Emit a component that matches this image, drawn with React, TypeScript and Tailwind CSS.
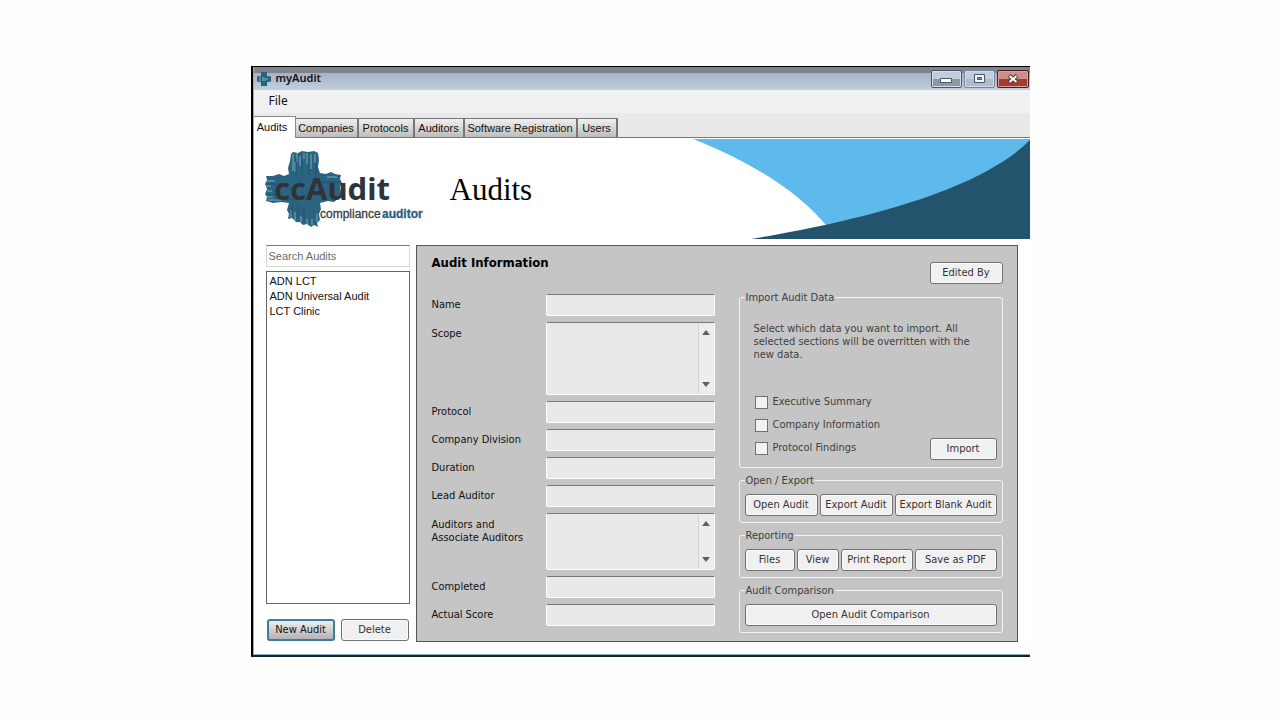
import { useState } from 'react';
import type { ReactNode } from 'react';

const TABS = [
  { label: 'Companies', width: 'w-[63px]' },
  { label: 'Protocols', width: 'w-[56px]' },
  { label: 'Auditors', width: 'w-[50px]' },
  { label: 'Software Registration', width: 'w-[113px]' },
  { label: 'Users', width: 'w-[40px]' },
];

const AUDITS = ['ADN LCT', 'ADN Universal Audit', 'LCT Clinic'];

const FIELD = 'border border-white border-t-[#777777] rounded-xs bg-[#e9e9e9]';

function Button({ children, className = '' }: { children: ReactNode; className?: string }) {
  return (
    <button
      type="button"
      className={`h-[22px] shrink-0 rounded-[3px] border border-[#707070] bg-[#f0f0f0] text-center leading-5 whitespace-nowrap text-[#333333] shadow-[inset_0_0_0_1px_#fafafa] ${className}`}
    >
      {children}
    </button>
  );
}

function TextRow({ id, label }: { id: string; label: string }) {
  return (
    <>
      <label htmlFor={id} className="pt-1 leading-[13px]">{label}</label>
      <input id={id} type="text" className={`h-[22px] w-full px-1 outline-none ${FIELD}`} />
    </>
  );
}

function AreaRow({ id, label, height }: { id: string; label: string; height: string }) {
  return (
    <>
      <label htmlFor={id} className="pt-[5px] pr-4 leading-[13px]">{label}</label>
      <div className={`flex ${height} ${FIELD}`}>
        <textarea id={id} className="min-w-0 flex-1 resize-none overflow-hidden bg-transparent px-1 outline-none" />
        <div className="my-px flex w-4 flex-col items-center justify-between border-l border-[#d0d0d0] bg-[#ededed] py-1.5">
          <svg width="8" height="5" viewBox="0 0 8 5" aria-hidden="true"><path d="M0 5 4 0l4 5z" fill="#606060" /></svg>
          <svg width="8" height="5" viewBox="0 0 8 5" aria-hidden="true"><path d="M0 0l4 5 4-5z" fill="#606060" /></svg>
        </div>
      </div>
    </>
  );
}

function Group({ title, children }: { title: string; children: ReactNode }) {
  return (
    <fieldset className="min-w-0 rounded-[3px] border border-[#f4f4f4] px-[5px] pb-1.5 text-[#3f3f3f]">
      <legend className="px-px leading-[14px]">{title}</legend>
      {children}
    </fieldset>
  );
}

function Check({ label }: { label: string }) {
  return (
    <label className="flex h-[23px] items-center gap-[5px]">
      <input type="checkbox" className="size-[13px] appearance-none border border-[#707070] bg-[#f2f2f2] checked:bg-[#24546d]" />
      {label}
    </label>
  );
}

function Logo() {
  return (
    <svg width="160" height="82" viewBox="0 0 160 82" role="img" aria-label="ccAudit compliance auditor" className="shrink-0">
      <path
        d="M27 6L29 4 34 5 38 3 44 4 50 3 54 5 55 12 54 19 56 25 62 26 67 24 71 26 77 27 76 31 78 35 76 39 77 45 75 50 70 54 64 53 56 55 57 61 55 66 56 72 53 75 54 79 50 77 47 79 43 76 39 77 36 74 32 74 28 70 24 71 25 66 23 62 25 55 17 54 9 55 2 53 3 49 1 46 3 41 1 36 3 32 2 28 9 28 15 26 20 28 25 26 24 20 26 13z"
        fill="#2b6481"
      />
      {/* dry brush streaks */}
      <g fill="none" stroke="#a9cfe0" strokeWidth="1" opacity=".65">
        <path d="M29 6v17M33 5v9M36 8v10M43 5v11M47 6v15M51 6v9M31 14v10M40 5v6" />
        <path d="M3 33h8M2 38h5M3 43h5M2 49h7M4 52h14M63 29h10" />
        <path d="M27 62v7M31 64v9M37 68v6M43 71v5M48 71v6M53 66v8" />
      </g>
      <g fill="none" stroke="#17455e" strokeWidth="1" opacity=".6">
        <path d="M32 10v18M38 12v14M45 10v17M52 14v16M28 58v9M34 57v13M40 60v10" />
        <path d="M4 36h14M5 47h9M12 51h24M58 34h18" />
      </g>
      <text x="10" y="52" fill="#30343a" fontFamily="'Noto Sans', sans-serif" fontWeight="700" fontSize="31">ccAudit</text>
      <text x="56" y="70" fill="#3a3d42" stroke="#3a3d42" strokeWidth=".3" fontFamily="'Liberation Sans', sans-serif" fontSize="12">compliance</text>
      <text x="118" y="70" fill="#2b5f7c" stroke="#2b5f7c" strokeWidth=".3" fontFamily="'Liberation Sans', sans-serif" fontWeight="700" fontSize="12">auditor</text>
    </svg>
  );
}

function TitleBar() {
  return (
    <header className="flex h-[23px] items-start border-t-6 border-[#80848d] bg-linear-to-b from-[#a5b2c5] to-[#c2cfdf]">
      <div className="-mt-1 flex h-5 flex-1 items-center gap-1 pl-0.5">
        <svg width="16" height="16" viewBox="0 0 16 16" aria-hidden="true">
          <path d="M5 1h6v4l4 .5v5L11 11v4H5v-4l-4-.5v-5L5 5z" fill="#28627e" />
          <path d="M3 7h2M3 9h2M7 6v4M9 7v3M11 7v2" stroke="#8fb4c6" />
        </svg>
        <h1 className="font-[Noto_Sans] text-[11px] font-semibold text-[#111111]">myAudit</h1>
      </div>
      <div className="-mt-[3px] flex gap-0.5 pr-px">
        <button type="button" aria-label="Minimize" className="flex h-[18px] w-[31px] items-center justify-center rounded-xs border border-[#4d5868] bg-linear-to-b from-[#c3ccd8] from-50% to-[#8c98a8] to-50% shadow-[inset_0_0_0_1px_#d5dce6]">
          <svg width="12" height="9" viewBox="0 0 12 9"><path d="M.5 4.500h11v4H.5z" fill="#fff" stroke="#4c5462" /></svg>
        </button>
        <button type="button" aria-label="Maximize" className="flex h-[18px] w-[31px] items-center justify-center rounded-xs border border-[#77859a] bg-linear-to-b from-[#c3cddb] from-50% to-[#aebccd] to-50% shadow-[inset_0_0_0_1px_#d5dce6]">
          <svg width="11" height="9" viewBox="0 0 11 9"><path d="M.5.5h10v8H.5z" fill="#f4f4f4" stroke="#4c5462" /><path d="M3.500 3.500h4v2h-4z" fill="#8a96a8" stroke="#4c5462" /></svg>
        </button>
        <button type="button" aria-label="Close" className="flex h-[18px] w-[32px] items-center justify-center rounded-xs border border-[#4a1c1c] bg-linear-to-b from-[#cf8f88] from-50% to-[#a83a30] to-50% shadow-[inset_0_0_0_1px_#d9a59f]">
          <svg width="12" height="10" viewBox="0 0 12 10"><path d="M2 1.500 10 8.500M10 1.500 2 8.500" stroke="#53383a" strokeWidth="4" /><path d="M2.500 2 9.500 8M9.500 2 2.500 8" stroke="#fff" strokeWidth="2" /></svg>
        </button>
      </div>
    </header>
  );
}

export default function App() {
  const [search, setSearch] = useState('');
  const audits = AUDITS.filter((a) => a.toLowerCase().includes(search.toLowerCase()));

  return (
    <div className="flex min-h-screen items-center justify-center bg-[#fefefe] pt-0.5 font-['DejaVu_Sans_Condensed','DejaVu_Sans',sans-serif] text-[11px] text-[#111111]">
      <div className="w-full max-w-[779px] border-t border-b-2 border-l-2 border-black border-b-[#14242c] bg-white">
        <div className="border-b border-l border-[#8fb0c4]">
          <TitleBar />

          {/* Menu */}
          <nav className="flex h-[23px] items-center bg-[#f1f1f1] pl-[15px]">
            <button type="button" className="font-[Noto_Sans] text-xs leading-4">File</button>
          </nav>

          {/* Tabs */}
          <div role="tablist" className="flex h-[25px] items-end border-b border-[#6f7a7a] bg-[#e9e9e9] font-[Liberation_Sans] text-[11px]">
            <button type="button" role="tab" aria-selected="true" className="-mb-px h-[22px] w-[42px] border-t border-r border-[#8a8a8a] bg-white pr-1">
              Audits
            </button>
            {TABS.map((tab) => (
              <button
                key={tab.label}
                type="button"
                role="tab"
                aria-selected="false"
                className={`h-[19px] border-t border-r-2 border-[#777777] bg-linear-to-b from-[#f0f0f0] to-[#bdbdbd] pt-px whitespace-nowrap ${tab.width}`}
              >
                {tab.label}
              </button>
            ))}
          </div>

          {/* Banner */}
          <div className="mt-px flex h-[100px] items-center">
            <div className="pl-[10px]"><Logo /></div>
            <h2 className="flex-1 pt-0.5 pl-[26px] font-[Liberation_Serif] text-[31px] leading-9 text-black">Audits</h2>
            <svg width="337" height="100" viewBox="0 0 337 100" aria-hidden="true" className="shrink-0">
              <path d="M0 0H337V86H133C107 55 63 25 0 0z" fill="#5fbaec" />
              <path d="M58 100C140 86 280 58 337 1V100z" fill="#24546d" />
            </svg>
          </div>

          <div className="flex gap-1.5 px-3 pt-1.5 pb-3">
            {/* Audit list */}
            <aside className="flex w-36 shrink-0 flex-col font-[Liberation_Sans]">
              <input
                type="search"
                aria-label="Search Audits"
                placeholder="Search Audits"
                value={search}
                onChange={(e) => setSearch(e.target.value)}
                className="h-[22px] border border-[#d8d8d8] border-t-[#777777] px-0.5 text-[11px] outline-none placeholder:text-[#6b6b6b]"
              />
              <ul className="mt-1 flex-1 border border-[#666666] bg-white px-[3px] pt-0.5 leading-[15px]">
                {audits.map((audit) => (
                  <li key={audit}>{audit}</li>
                ))}
              </ul>
              <div className="mt-[15px] flex gap-1.5 px-px pb-px font-['DejaVu_Sans_Condensed','DejaVu_Sans',sans-serif]">
                <button type="button" className="h-[22px] w-[68px] rounded-[3px] border-2 border-[#3b7f93] bg-linear-to-b from-[#eeeeee] to-[#b4b4b8] leading-4 whitespace-nowrap">
                  New Audit
                </button>
                <Button className="w-[68px]">Delete</Button>
              </div>
            </aside>

            {/* Audit details */}
            <main className="flex min-w-0 flex-1 justify-between gap-6 border border-[#555555] bg-[#c5c5c5] pr-[14px] pb-2 pl-[15px]">
              <form className="min-w-0 flex-1 pt-[9px]">
                <h3 className="text-[13px] leading-4 font-bold text-black">Audit Information</h3>
                <div className="mt-[23px] grid grid-cols-[114px_1fr] items-start gap-y-1.5">
                  <TextRow id="name" label="Name" />
                  <AreaRow id="scope" label="Scope" height="h-[73px]" />
                  <TextRow id="protocol" label="Protocol" />
                  <TextRow id="division" label="Company Division" />
                  <TextRow id="duration" label="Duration" />
                  <TextRow id="lead" label="Lead Auditor" />
                  <AreaRow id="auditors" label="Auditors and Associate Auditors" height="h-[57px]" />
                  <TextRow id="completed" label="Completed" />
                  <TextRow id="score" label="Actual Score" />
                </div>
              </form>

              <div className="flex w-[264px] shrink-0 flex-col gap-1.5 pt-4">
                <div className="flex justify-end pb-px"><Button className="w-[73px]">Edited By</Button></div>

                <Group title="Import Audit Data">
                  <p className="pt-[17px] pr-6 pb-[14px] pl-[9px] leading-[13px]">
                    Select which data you want to import. All selected sections will be overritten with the new data.
                  </p>
                  <div className="mt-4 flex items-end justify-between pb-px pl-[10px]">
                    <div>
                      <Check label="Executive Summary" />
                      <Check label="Company Information" />
                      <Check label="Protocol Findings" />
                    </div>
                    <Button className="w-[67px]">Import</Button>
                  </div>
                </Group>

                <Group title="Open / Export">
                  <div className="flex gap-0.5 pt-1.5">
                    <Button className="w-[73px]">Open Audit</Button>
                    <Button className="w-[73px]">Export Audit</Button>
                    <Button className="w-[102px]">Export Blank Audit</Button>
                  </div>
                </Group>

                <Group title="Reporting">
                  <div className="flex gap-0.5 pt-1.5">
                    <Button className="w-[50px]">Files</Button>
                    <Button className="w-[42px]">View</Button>
                    <Button className="w-[72px]">Print Report</Button>
                    <Button className="w-[82px]">Save as PDF</Button>
                  </div>
                </Group>

                <Group title="Audit Comparison">
                  <div className="flex pt-1.5">
                    <Button className="flex-1">Open Audit Comparison</Button>
                  </div>
                </Group>
              </div>
            </main>
          </div>
        </div>
      </div>
    </div>
  );
}
